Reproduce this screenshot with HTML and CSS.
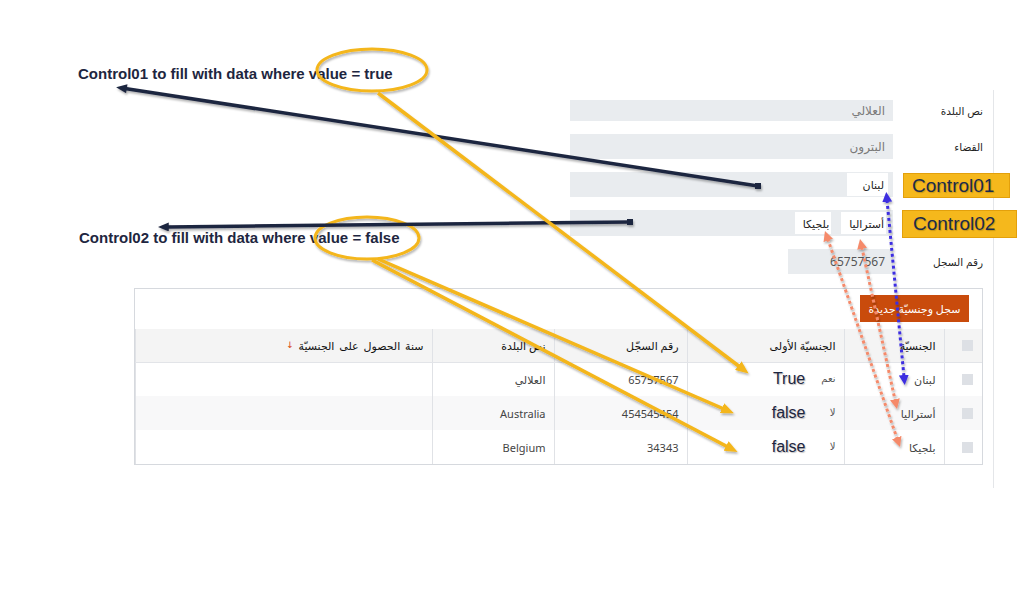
FILE: index.html
```html
<!DOCTYPE html>
<html lang="ar">
<head>
    <meta charset="UTF-8">
    <meta name="viewport" content="width=device-width, initial-scale=1.0">
    <title>الجنسيّة</title>
    <link rel="stylesheet" href="styles.css">
</head>
<body>
    <div class="page">
        <div class="panel">
            <div class="form">
                <div class="field">
                    <label class="field-label">نص البلدة</label>
                    <div class="field-input is-short">العلالي</div>
                </div>
                <div class="field">
                    <label class="field-label">القضاء</label>
                    <div class="field-input">البترون</div>
                </div>
                <div class="field">
                    <label class="field-label"></label>
                    <div class="field-input has-chips is-tight">
                        <span class="chip chip-wide">لبنان</span>
                    </div>
                </div>
                <div class="field">
                    <label class="field-label"></label>
                    <div class="field-input has-chips is-tall">
                        <span class="chip">أستراليا</span>
                        <span class="chip">بلجيكا</span>
                    </div>
                </div>
                <div class="field">
                    <label class="field-label">رقم السجل</label>
                    <div class="field-input is-narrow">65757567</div>
                </div>
            </div>

            <div class="grid">
                <div class="grid-toolbar">
                    <button class="btn">سجل وجنسيّة جديدة</button>
                </div>
                <table class="grid-table">
                    <colgroup>
                        <col class="col-check">
                        <col class="col-nation">
                        <col class="col-first">
                        <col class="col-number">
                        <col class="col-village">
                        <col>
                    </colgroup>
                    <thead>
                        <tr>
                            <th class="cell-check"><span class="check"></span></th>
                            <th>الجنسيّة</th>
                            <th>الجنسيّة الأولى</th>
                            <th>رقم السجّل</th>
                            <th>نص البلدة</th>
                            <th class="cell-wide">سنة الحصول على الجنسيّة <span class="sort">&#8595;</span></th>
                        </tr>
                    </thead>
                    <tbody>
                        <tr>
                            <td class="cell-check"><span class="check"></span></td>
                            <td class="cell-nation">لبنان</td>
                            <td><span class="flag">نعم</span><span class="cell-note">True</span></td>
                            <td>65757567</td>
                            <td>العلالي</td>
                            <td></td>
                        </tr>
                        <tr>
                            <td class="cell-check"><span class="check"></span></td>
                            <td class="cell-nation">أستراليا</td>
                            <td><span class="flag">لا</span><span class="cell-note">false</span></td>
                            <td>454545454</td>
                            <td>Australia</td>
                            <td></td>
                        </tr>
                        <tr>
                            <td class="cell-check"><span class="check"></span></td>
                            <td class="cell-nation">بلجيكا</td>
                            <td><span class="flag">لا</span><span class="cell-note">false</span></td>
                            <td>34343</td>
                            <td>Belgium</td>
                            <td></td>
                        </tr>
                    </tbody>
                </table>
            </div>
        </div>

        <p class="note note-true">Control01 to fill with data where value = true</p>
        <p class="note note-false">Control02 to fill with data where value = false</p>
        <div class="tag tag-one">Control01</div>
        <div class="tag tag-two">Control02</div>

        <svg class="overlay" width="1024" height="589" viewBox="0 0 1024 589" xmlns="http://www.w3.org/2000/svg">
            <defs>
                <filter id="drop" filterUnits="userSpaceOnUse" x="0" y="0" width="1024" height="589">
                    <feDropShadow dx="1" dy="2" stdDeviation="1" flood-color="#000" flood-opacity="0.3"/>
                </filter>
                <marker id="head-navy" viewBox="0 0 12 10" refX="2" refY="5" markerWidth="12" markerHeight="9" markerUnits="userSpaceOnUse" orient="auto">
                    <path d="M0 0L12 5L0 10Z" fill="#1e2640"/>
                </marker>
                <marker id="head-yellow" viewBox="0 0 12 10" refX="2" refY="5" markerWidth="13" markerHeight="11" markerUnits="userSpaceOnUse" orient="auto">
                    <path d="M0 0L12 5L0 10Z" fill="#f4b61a"/>
                </marker>
                <marker id="head-blue" viewBox="0 0 10 10" refX="2" refY="5" markerWidth="10" markerHeight="10" markerUnits="userSpaceOnUse" orient="auto-start-reverse">
                    <path d="M0 0L10 5L0 10Z" fill="#3d2ee0"/>
                </marker>
                <marker id="head-salmon" viewBox="0 0 10 10" refX="2" refY="5" markerWidth="10" markerHeight="10" markerUnits="userSpaceOnUse" orient="auto-start-reverse">
                    <path d="M0 0L10 5L0 10Z" fill="#f58a6b"/>
                </marker>
            </defs>

            <g filter="url(#drop)">
                <ellipse cx="372" cy="70" rx="55" ry="21" fill="none" stroke="#f4b61a" stroke-width="3"/>
                <ellipse cx="367" cy="238" rx="52" ry="21" fill="none" stroke="#f4b61a" stroke-width="3"/>

                <line x1="758" y1="186" x2="125" y2="88.5" stroke="#1e2640" stroke-width="3.5" marker-end="url(#head-navy)"/>
                <rect x="755" y="183" width="6" height="6" fill="#1e2640"/>
                <line x1="630" y1="222" x2="167" y2="227" stroke="#1e2640" stroke-width="3.5" marker-end="url(#head-navy)"/>
                <rect x="627" y="219" width="6" height="6" fill="#1e2640"/>

                <line x1="378" y1="93" x2="740" y2="367" stroke="#f4b61a" stroke-width="3.5" marker-end="url(#head-yellow)"/>
                <line x1="378" y1="259" x2="724" y2="409" stroke="#f4b61a" stroke-width="3.5" marker-end="url(#head-yellow)"/>
                <line x1="372" y1="260" x2="728" y2="447" stroke="#f4b61a" stroke-width="3.5" marker-end="url(#head-yellow)"/>

                <line x1="887" y1="200" x2="904" y2="377" stroke="#3d2ee0" stroke-width="3" stroke-dasharray="3 3" marker-start="url(#head-blue)" marker-end="url(#head-blue)"/>
                <line x1="827.6" y1="238.6" x2="897.4" y2="439.4" stroke="#f58a6b" stroke-width="3" stroke-dasharray="3 3" marker-start="url(#head-salmon)" marker-end="url(#head-salmon)"/>
                <line x1="861.7" y1="246.8" x2="895.3" y2="401.2" stroke="#f58a6b" stroke-width="3" stroke-dasharray="3 3" marker-start="url(#head-salmon)" marker-end="url(#head-salmon)"/>
            </g>
        </svg>
    </div>
</body>
</html>
```

FILE: styles.css
```css
:root {
    --field: #e9ecef;
    --line: #dcdfe4;
    --accent: #c94b0c;
    --ink: #1e2640;
    --marker: #f5b81c;
    --text: #333333;
}

* {
    margin: 0;
    padding: 0;
    box-sizing: border-box;
}

body {
    background: #ffffff;
    color: var(--text);
    font-family: "Noto Sans", "DejaVu Sans", sans-serif;
    font-size: 11px;
}

.page {
    position: relative;
    width: 1024px;
    height: 589px;
    overflow: hidden;
    padding-top: 90px;
}

/* Panneau du formulaire */
.panel {
    direction: rtl;
    margin-left: 134px;
    width: 860px;
    padding: 10px 10px 23px 0;
    border-right: 1px solid #e4e6e9;
}

.form {
    display: flex;
    flex-direction: column;
    gap: 13px;
    margin-bottom: 14px;
}

.field {
    display: flex;
    align-items: center;
}

.field-label {
    width: 90px;
    font-size: 10.5px;
    color: #1f1f1f;
}

.field-input {
    width: 323px;
    height: 25px;
    background: var(--field);
    display: flex;
    align-items: center;
    padding: 0 8px;
    color: #7a7a7a;
    font-size: 12px;
}

.field-input.is-short {
    height: 21px;
}

.field-input.is-narrow {
    width: 105px;
    color: #555;
}

.field-input.has-chips {
    gap: 10px;
    color: #222;
}

.field-input.is-tight {
    padding: 1px 5px;
}

.field-input.is-tall {
    height: 26px;
    padding: 2px 7px;
}

.chip {
    height: 100%;
    background: #ffffff;
    display: flex;
    align-items: center;
    padding: 0 2px 0 8px;
    font-size: 11px;
}

.chip-wide {
    padding: 0 4px 0 16px;
}

/* Grille */
.grid {
    border: 1px solid #d6d9de;
}

.grid-toolbar {
    height: 40px;
    padding: 6px 13px 0;
}

.btn {
    width: 109px;
    height: 27px;
    border: none;
    background: var(--accent);
    color: #ffffff;
    font-family: inherit;
    font-size: 11px;
}

.grid-table {
    width: 100%;
    border-collapse: collapse;
    table-layout: fixed;
}

.col-check { width: 38px; }
.col-nation { width: 100px; }
.col-first { width: 157px; }
.col-number { width: 133px; }
.col-village { width: 122px; }

.grid-table th,
.grid-table td {
    height: 34px;
    padding: 0 8px;
    text-align: right;
    border-left: 1px solid #e0e2e6;
    white-space: nowrap;
    line-height: 1;
}

.grid-table th {
    height: 33px;
    background: #f4f4f4;
    border-bottom: 1px solid #e2e4e8;
    font-weight: normal;
    color: #111;
}

.grid-table th.cell-wide {
    word-spacing: 2px;
}

.grid-table td {
    color: #444;
}

.grid-table tbody tr:nth-child(even) td {
    background: #f8f8f9;
}

.grid-table .cell-check {
    padding: 0 9px 0 0;
}

.check {
    display: block;
    width: 11px;
    height: 11px;
    background: #dde0e5;
}

.cell-nation {
    color: #111;
}

.flag {
    display: inline-block;
    min-width: 14px;
    font-size: 10px;
    color: #555;
}

.cell-note {
    display: inline-block;
    margin-right: 16px;
    font-family: "Liberation Sans", Arial, sans-serif;
    font-size: 16px;
    color: var(--ink);
    text-shadow: 1px 1px 1px rgba(0, 0, 0, 0.25);
    vertical-align: -2px;
}

.sort {
    color: #d9480f;
    font-size: 9px;
    word-spacing: 0;
    vertical-align: 2px;
}

/* Annotations */
.note {
    position: absolute;
    font-family: "Liberation Sans", Arial, sans-serif;
    font-size: 15px;
    font-weight: bold;
    line-height: 18px;
    color: var(--ink);
    white-space: nowrap;
}

.note-true {
    left: 78px;
    top: 65px;
}

.note-false {
    left: 79px;
    top: 229px;
}

.tag {
    position: absolute;
    background: var(--marker);
    border: 1px solid #e3a00b;
    font-family: "Liberation Sans", Arial, sans-serif;
    font-size: 19px;
    color: #1b2a4a;
    padding-left: 8px;
    text-shadow: 1px 1px 1px rgba(0, 0, 0, 0.2);
}

.tag-one {
    left: 903px;
    top: 173px;
    width: 107px;
    height: 25px;
    line-height: 23px;
}

.tag-two {
    left: 902px;
    top: 210px;
    width: 115px;
    height: 28px;
    line-height: 26px;
    padding-left: 10px;
}

.overlay {
    position: absolute;
    top: 0;
    left: 0;
    pointer-events: none;
}
```
